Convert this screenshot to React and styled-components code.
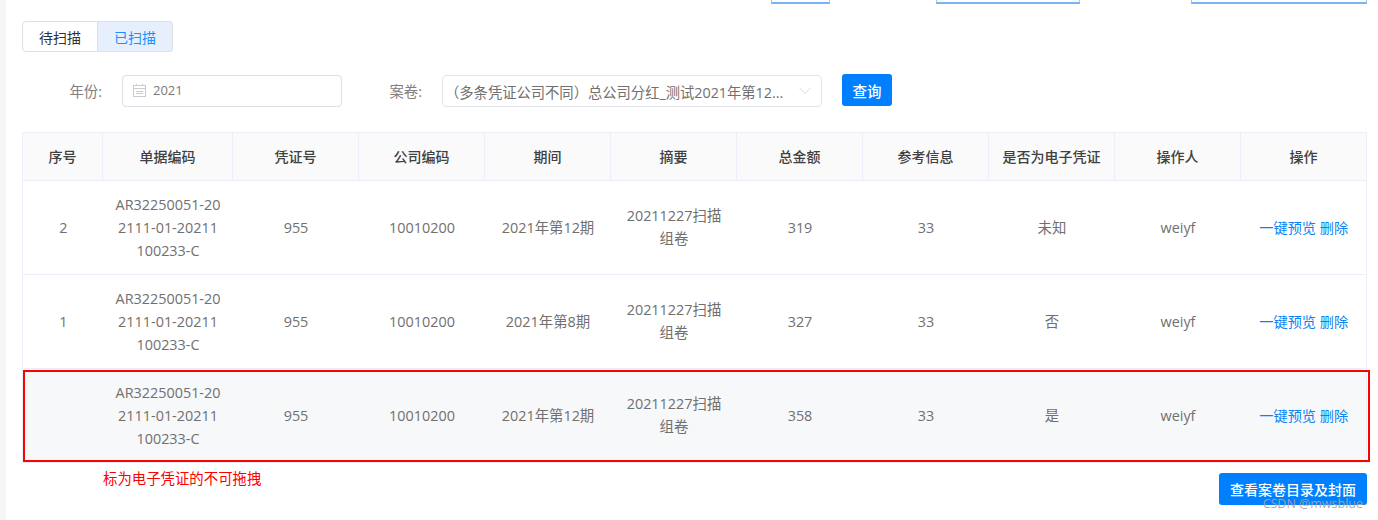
import React from "react";
import styled, { createGlobalStyle } from "styled-components";
import { ChevronDown } from "lucide-react";

const columns = [
  { title: "序号", width: 80 },
  { title: "单据编码", width: 130 },
  { title: "凭证号", width: 126 },
  { title: "公司编码", width: 126 },
  { title: "期间", width: 126 },
  { title: "摘要", width: 126 },
  { title: "总金额", width: 126 },
  { title: "参考信息", width: 126 },
  { title: "是否为电子凭证", width: 126 },
  { title: "操作人", width: 126 },
  { title: "操作", width: 126 },
];

const rows = [
  { no: "2", period: "2021年第12期", total: "319", electronic: "未知" },
  { no: "1", period: "2021年第8期", total: "327", electronic: "否" },
  { no: "", period: "2021年第12期", total: "358", electronic: "是", muted: true },
];

export default function App() {
  return (
    <Page>
      <GlobalStyle />
      <Main>
        <TopStubs>
          <Stub $left={771} $width={59} />
          <Stub $left={936} $width={144} />
          <Stub $left={1191} $width={176} />
        </TopStubs>

        <Tabs>
          <Tab>待扫描</Tab>
          <Tab $active>已扫描</Tab>
        </Tabs>

        <Filters>
          <FilterLabel>年份:</FilterLabel>
          <DateInput>
            <CalendarIcon />
            2021
          </DateInput>
          <FilterLabel>案卷:</FilterLabel>
          <SelectBox>
            <SelectText>（多条凭证公司不同）总公司分红_测试2021年第12...</SelectText>
            <ChevronDown size={20} strokeWidth={0.8} color="#c0c4cc" />
          </SelectBox>
          <QueryButton>查询</QueryButton>
        </Filters>

        <TableWrap>
          <Table>
            <colgroup>
              {columns.map((c) => (
                <col key={c.title} width={c.width} />
              ))}
            </colgroup>
            <thead>
              <tr>
                {columns.map((c) => (
                  <Th key={c.title}>{c.title}</Th>
                ))}
              </tr>
            </thead>
            <tbody>
              {rows.map((r) => (
                <Row key={r.total} $muted={r.muted}>
                  <Td>{r.no}</Td>
                  <Td>
                    <Code>AR32250051-202111-01-20211100233-C</Code>
                  </Td>
                  <Td>955</Td>
                  <Td>10010200</Td>
                  <Td>{r.period}</Td>
                  <Td>
                    <Summary>20211227扫描组卷</Summary>
                  </Td>
                  <Td>{r.total}</Td>
                  <Td>33</Td>
                  <Td>{r.electronic}</Td>
                  <Td>weiyf</Td>
                  <Td>
                    <Action>一键预览</Action> <Action>删除</Action>
                  </Td>
                </Row>
              ))}
            </tbody>
          </Table>
          <Highlight />
        </TableWrap>

        <Footer>
          <Note>标为电子凭证的不可拖拽</Note>
          <CatalogButton>查看案卷目录及封面</CatalogButton>
        </Footer>
        <Watermark>CSDN @mwsblue</Watermark>
      </Main>
    </Page>
  );
}

function CalendarIcon() {
  return (
    <svg width="13" height="13" viewBox="0 0 13 13" fill="none" stroke="#c8cbd3" strokeWidth="1">
      <rect x="0.5" y="1.5" width="12" height="11" />
      <path d="M0.5 4.5h12M3.5 0v2M9.5 0v2M3 7.5h7M3 9.5h7" />
    </svg>
  );
}

const GlobalStyle = createGlobalStyle`
  html, body {
    margin: 0;
    padding: 0;
    background: #fff;
  }
  * {
    box-sizing: border-box;
  }
`;

const Page = styled.div`
  width: 1378px;
  height: 520px;
  overflow: hidden;
  background: #f5f6f8;
  padding-left: 6px;
  font-family: "Open Sans", "Noto Sans CJK SC", sans-serif;
  font-size: 14.4px;
  color: #606266;
`;

const Main = styled.div`
  position: relative;
  height: 520px;
  background: #fff;
  padding: 21px 0 0 16px;
`;

const TopStubs = styled.div`
  position: absolute;
  top: 0;
  left: -6px;
`;

const Stub = styled.div`
  position: absolute;
  top: 0;
  left: ${(p) => p.$left}px;
  width: ${(p) => p.$width}px;
  height: 4px;
  border: 1px solid #9cc6f8;
  border-top: 0;
  border-bottom: 2px solid #7ab2f7;
  background: #fff;
`;

const Tabs = styled.div`
  display: flex;
  width: 151px;
  height: 31px;
`;

const Tab = styled.div`
  flex: 1;
  display: flex;
  align-items: center;
  justify-content: center;
  font-size: 14px;
  color: ${(p) => (p.$active ? "#1e8fff" : "#303133")};
  background: ${(p) => (p.$active ? "#e6effb" : "#fff")};
  border: 1px solid #dcdfe6;
  border-radius: ${(p) => (p.$active ? "0 4px 4px 0" : "4px 0 0 4px")};
  ${(p) => p.$active && "border-left: 0;"}
`;

const Filters = styled.div`
  display: flex;
  align-items: center;
  height: 34px;
  margin-top: 22px;
`;

const FilterLabel = styled.label`
  width: 80px;
  padding-bottom: 2px;
  text-align: right;
  color: #808080;
  font-size: 14.4px;
`;

const DateInput = styled.div`
  display: flex;
  align-items: center;
  gap: 7px;
  width: 220px;
  height: 32px;
  margin-left: 20px;
  padding: 0 0 2px 10px;
  border: 1px solid #dcdfe6;
  border-radius: 4px;
  font-size: 13px;
  color: #7a7a7a;
`;

const SelectBox = styled.div`
  display: flex;
  align-items: center;
  justify-content: space-between;
  width: 380px;
  height: 32px;
  margin-left: 20px;
  padding: 0 6px 0 2px;
  border: 1px solid #e2e4ea;
  border-radius: 4px;
`;

const SelectText = styled.span`
  white-space: nowrap;
  font-size: 14.3px;
  color: #707070;
`;

const QueryButton = styled.button`
  width: 50px;
  height: 32px;
  margin: 0 0 2px 20px;
  padding: 0;
  border: 0;
  border-radius: 3px;
  background: #0080ff;
  color: #fff;
  font: inherit;
  font-size: 14.5px;
  font-weight: 500;
`;

const TableWrap = styled.div`
  position: relative;
  width: 1344px;
  margin-top: 24px;
`;

const Table = styled.table`
  width: 1344px;
  table-layout: fixed;
  border-collapse: collapse;
`;

const Th = styled.th`
  height: 48px;
  padding: 0 0 2px;
  border: 1px solid #eceef8;
  background: #fafafa;
  color: #404040;
  font-size: 14px;
  font-weight: 500;
  text-align: center;
`;

const Row = styled.tr`
  height: 94px;
  background: ${(p) => (p.$muted ? "#f7f8fa" : "#fff")};
`;

const Td = styled.td`
  padding: 0 0 1px 1px;
  border-top: 1px solid #eceef8;
  border-bottom: 1px solid #eceef8;
  text-align: center;
  line-height: 23px;
  color: #707070;
  &:first-child {
    border-left: 1px solid #eceef8;
  }
  &:last-child {
    border-right: 1px solid #eceef8;
  }
`;

const Code = styled.div`
  width: 106px;
  margin: 0 auto;
  word-break: break-all;
`;

const Summary = styled.div`
  width: 100px;
  margin: 0 auto;
`;

const Action = styled.a`
  color: #0a84f5;
  font-size: 14.2px;
`;

// red marker drawn over the last row in the reference
const Highlight = styled.div`
  position: absolute;
  left: 1px;
  bottom: 1px;
  width: 1347px;
  height: 92px;
  border: 2px solid #ff0000;
  pointer-events: none;
`;

const Footer = styled.div`
  display: flex;
  justify-content: space-between;
  align-items: flex-start;
  width: 1345px;
  padding-left: 81px;
  margin-top: 6px;
`;

const Note = styled.div`
  color: #ff0000;
  font-size: 14.4px;
  line-height: 20px;
`;

const CatalogButton = styled.button`
  width: 148px;
  height: 32px;
  margin-top: 4px;
  padding: 0;
  border: 0;
  border-radius: 3px;
  background: #0080ff;
  color: #fff;
  font: inherit;
  font-size: 14px;
  font-weight: 500;
`;

// sits over the button corner, as the site watermark does in the reference
const Watermark = styled.div`
  position: absolute;
  right: 15px;
  bottom: 9px;
  color: rgba(165, 165, 165, 0.95);
  font-size: 12.5px;
  line-height: 14px;
`;
